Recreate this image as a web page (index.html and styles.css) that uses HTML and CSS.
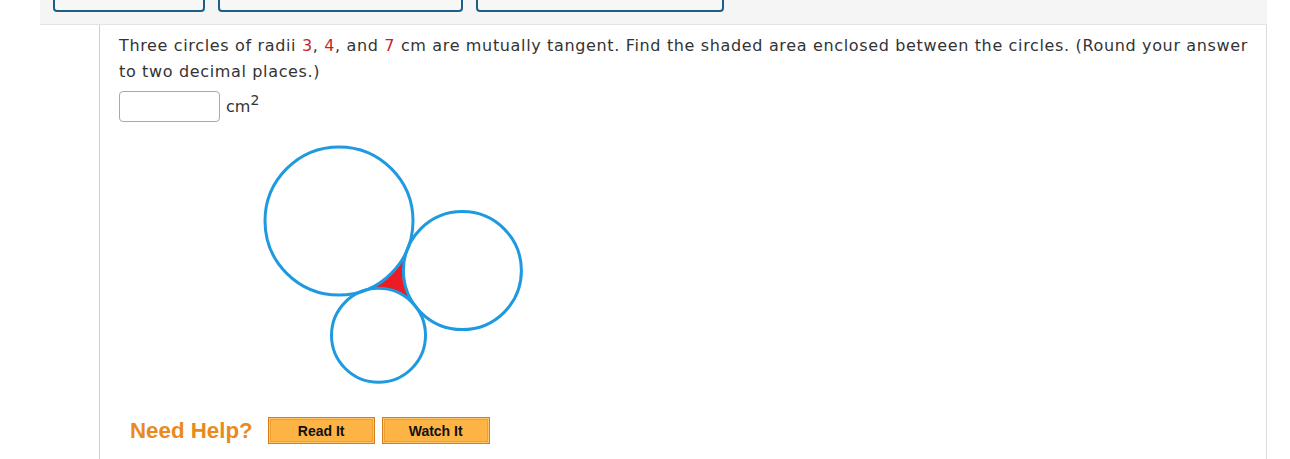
FILE: index.html
```html
<!DOCTYPE html>
<html>
<head>
<meta charset="utf-8">
<link rel="stylesheet" href="styles.css">
</head>
<body>
<div class="page">
  <div class="topbar">
    <div class="tab tab1"></div>
    <div class="tab tab2"></div>
    <div class="tab tab3"></div>
  </div>
  <div class="content">
    <div class="num-col"></div>
    <div class="main">
      <p class="question">Three circles of radii <span class="red">3</span>, <span class="red">4</span>, and <span class="red">7</span> cm are mutually tangent. Find the shaded area enclosed between the circles. (Round your answer to two decimal places.)</p>
      <div class="answer-row">
        <input class="answer" type="text">
        <span class="unit">cm<sup>2</sup></span>
      </div>
      <svg class="figure" width="270" height="250" viewBox="260 140 270 250">
        <path d="M407.66 248.57 A74 74 0 0 1 363.18 290.96 A47 47 0 0 1 415.66 306.65 A59 59 0 0 1 407.66 248.57 Z" fill="#ec1c24"/>
        <circle cx="339" cy="221" r="74" fill="none" stroke="#1f9ae0" stroke-width="3"/>
        <circle cx="462.4" cy="270.6" r="59" fill="none" stroke="#1f9ae0" stroke-width="3"/>
        <circle cx="378.5" cy="335.3" r="47" fill="none" stroke="#1f9ae0" stroke-width="3"/>
      </svg>
      <div class="help-row">
        <span class="need-help">Need Help?</span>
        <button class="help-btn read">Read It</button>
        <button class="help-btn watch">Watch It</button>
      </div>
    </div>
  </div>
</div>
</body>
</html>
```
FILE: styles.css
```css
html, body {
  margin: 0;
  padding: 0;
  background: #ffffff;
}

.page {
  margin-left: 40px;
  width: 1227px;
  font-family: "DejaVu Sans", Verdana, sans-serif;
  color: #333333;
}

.topbar {
  height: 24px;
  background: #f5f5f5;
  border-bottom: 1px solid #e4e4e4;
  display: flex;
  gap: 13px;
  padding-left: 13px;
  overflow: hidden;
}

.tab {
  height: 30px;
  margin-top: -18px;
  box-sizing: border-box;
  border: 2px solid #1d5e87;
  border-radius: 4px;
  background: #f7f7f7;
}

.tab1 { width: 152px; }
.tab2 { width: 245px; }
.tab3 { width: 248px; }

.content {
  display: flex;
  height: 434px;
}

.num-col {
  width: 59px;
  border-right: 1px solid #cfcfcf;
}

.main {
  flex: 1;
  border-right: 1px solid #dcdcdc;
  padding: 8px 0 0 19px;
}

.question {
  margin: 0;
  font-size: 16px;
  line-height: 26px;
  letter-spacing: 0.65px;
  width: 1147px;
}

.red {
  color: #cc1f1f;
}

.answer-row {
  margin-top: 6px;
  display: flex;
  align-items: flex-start;
  height: 31px;
}

.answer {
  width: 101px;
  height: 31px;
  box-sizing: border-box;
  border: 1px solid #a9a9a9;
  border-radius: 4px;
  margin: 0;
  padding: 0;
  background: #fff;
}

.unit {
  margin-left: 6px;
  font-size: 16px;
  line-height: 20px;
  margin-top: 6px;
}

.unit sup {
  font-size: 14px;
  line-height: 0;
  vertical-align: 7px;
}

.figure {
  display: block;
  margin: 18px 0 0 141px;
}

.help-row {
  margin-top: 27px;
  margin-left: 11px;
  display: flex;
  align-items: center;
  height: 27px;
}

.need-help {
  font-family: "Liberation Sans", Arial, sans-serif;
  font-weight: bold;
  font-size: 22.3px;
  color: #ea8a1e;
  margin-right: 15px;
}

.help-btn {
  box-sizing: border-box;
  height: 27px;
  border: 1px solid #d57d18;
  box-shadow: inset 0 0 0 1px #ffc46e, inset 0 0 0 2px #f0a030;
  background: #fdb444;
  font-family: "Liberation Sans", Arial, sans-serif;
  font-weight: bold;
  font-size: 14px;
  color: #111;
  padding: 0;
  margin: 0;
}

.read { width: 107px; margin-right: 7px; }
.watch { width: 108px; }
```
